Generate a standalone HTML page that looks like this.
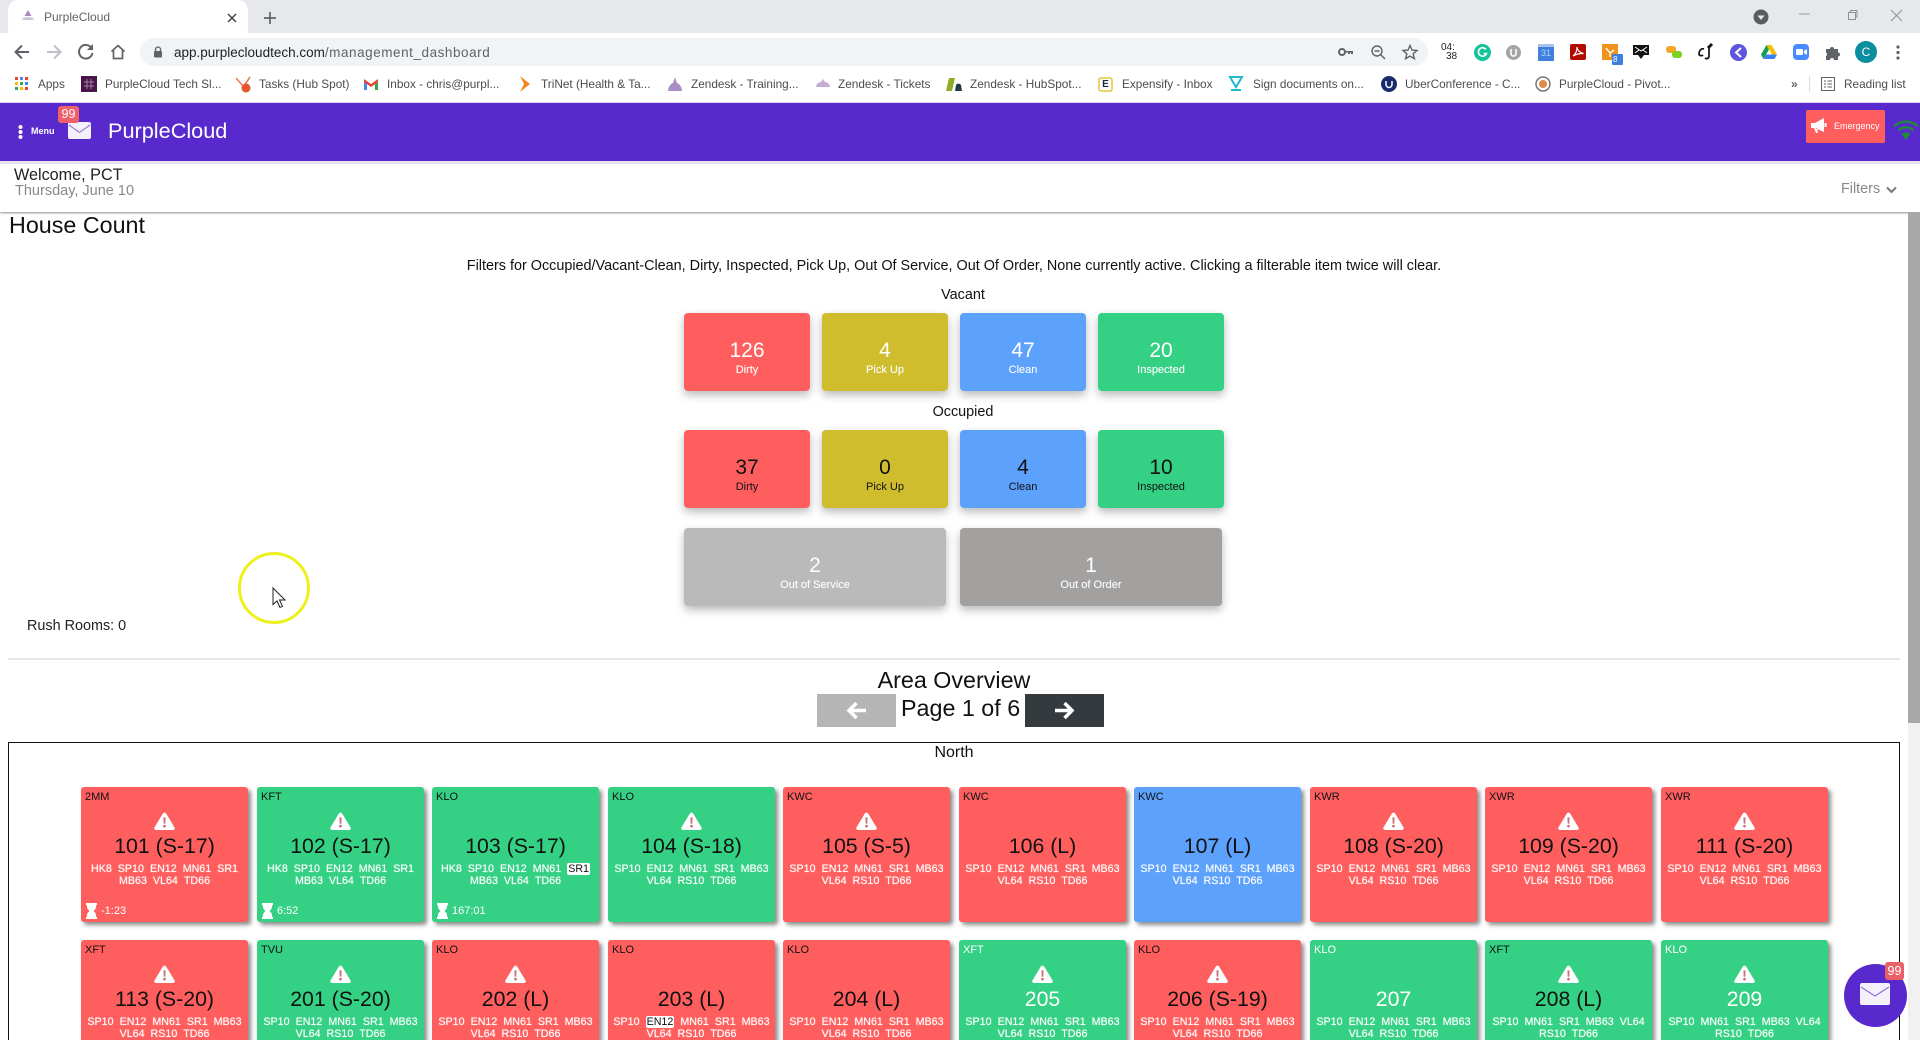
<!DOCTYPE html>
<html lang="en"><head><meta charset="utf-8"><title>PurpleCloud</title>
<style>
*{box-sizing:border-box}
html,body{margin:0;padding:0;width:1920px;height:1040px;overflow:hidden;background:#fff;font-family:"Liberation Sans",sans-serif;color:#111}
#p{position:relative;width:1920px;height:1040px;overflow:hidden;background:#fff}
.a{position:absolute;white-space:nowrap}
svg{position:absolute;overflow:visible}
.bm{position:absolute;top:76px;height:16px;line-height:16px;font-size:11.8px;color:#4a4d50;white-space:nowrap}
.s{position:absolute;width:126px;height:78px;border-radius:4px;box-shadow:0 4px 9px rgba(0,0,0,.28);text-align:center;color:#fff}
.s.k{color:#111}
.s i{position:absolute;left:0;right:0;top:25px;font-style:normal;font-size:21px;line-height:26px}
.s u{position:absolute;left:0;right:0;top:50px;text-decoration:none;font-size:11px;line-height:14px;text-shadow:0 0 1px rgba(255,255,255,.35)}
.s.k u{text-shadow:none}
.t{position:absolute;width:167px;height:135px;border-radius:3px;box-shadow:3px 3px 4px rgba(0,0,0,.45);color:#111;overflow:hidden}
.R{background:#ff5e5e}.G{background:#34d084}.B{background:#5ca1fb}.Y{background:#d0bd2e}
.t b{position:absolute;left:4px;top:3px;font-weight:400;font-size:11px;line-height:14px}
.t .w{left:73px;top:25px;width:21px;height:18px}
.t p{position:absolute;margin:0;left:0;right:0;top:45px;text-align:center;font-size:21.3px;line-height:28px}
.t div{position:absolute;left:0;right:0;top:76px;text-align:center;font-size:10.7px;line-height:12px;color:#fff;text-shadow:0 0 1px rgba(255,255,255,.6)}
.t div span{margin:0 3px}
.t div em{font-style:normal;margin:0 3px;background:#fff;color:#111;border-radius:2px;padding:0 1px;text-shadow:none}
.t .h{left:5px;top:116px;width:11px;height:16px}
.t s{position:absolute;left:20px;top:117px;text-decoration:none;color:#fff;font-size:11px;line-height:14px}
.W,.W b,.W p{color:#fff}
</style></head>
<body>
<div id="p">
<svg width="0" height="0" style="position:absolute"><defs>
<symbol id="warn" viewBox="0 0 21 18"><path d="M10.5 0.6c.8 0 1.4.4 1.8 1.1l8.2 13.7c.8 1.3-.2 2.6-1.6 2.6H2.1C.7 18-.3 16.7.5 15.4L8.7 1.7c.4-.7 1-1.1 1.8-1.1z" fill="#fff"/><path d="M9.4 5.4h2.2l-.3 6.4H9.7zM10.5 12.7a1.4 1.4 0 1 1 0 2.8 1.4 1.4 0 0 1 0-2.8z" fill="#c9707a"/></symbol>
<symbol id="hg" viewBox="0 0 11 16"><path d="M0 0h11v2.2h-1v1.6c0 2-1.4 3.2-2.6 4.2 1.2 1 2.6 2.2 2.6 4.2v1.6h1V16H0v-2.2h1v-1.6C1 10.200 2.400 9 3.600 8 2.400 7 1 5.800 1 3.800V2.200H0z" fill="#fff"/></symbol>
</defs></svg>

<!-- Browser chrome -->
<div class="a" style="left:0;top:0;width:1920px;height:33px;background:#e6e8eb"></div>
<div class="a" style="left:8px;top:0;width:240px;height:35px;background:#fff;border-radius:10px 10px 0 0"></div>
<svg style="left:21px;top:9px" width="14" height="14"><path d="M7 1l3.500 6H3.500z" fill="#a78cc4"/><path d="M1 10c1-2.500 11-2.500 12 0 0 1.500-12 1.500-12 0z" fill="#cfc3dc"/></svg>
<div class="a" style="left:44px;top:10px;font-size:12px;line-height:15px;color:#5f6368">PurpleCloud</div>
<svg style="left:226px;top:12px" width="12" height="12"><path d="M2 2l8 8M10 2l-8 8" stroke="#444" stroke-width="1.500" fill="none"/></svg>
<svg style="left:263px;top:11px" width="14" height="14"><path d="M7 1v12M1 7h12" stroke="#5f6368" stroke-width="1.700" fill="none"/></svg>
<svg style="left:1753px;top:9px" width="16" height="16"><circle cx="8" cy="8" r="7.500" fill="#5a5d61"/><path d="M4.500 6.500h7L8 11z" fill="#e6e8eb"/></svg>
<svg style="left:1799px;top:13px" width="12" height="2"><path d="M0 1h11" stroke="#9a9da1" stroke-width="1"/></svg>
<svg style="left:1846px;top:9px" width="12" height="12"><path d="M2.500 3.500h7v7h-7zM4.500 3.500V1.500h6.500v6.500h-1.500" stroke="#8d9094" fill="none"/></svg>
<svg style="left:1890px;top:9px" width="13" height="13"><path d="M1 1l11 11M12 1L1 12" stroke="#8d9094" stroke-width="1" fill="none"/></svg>

<div class="a" style="left:0;top:33px;width:1920px;height:35px;background:#fff"></div>
<svg style="left:0;top:33px" width="140" height="35"><g fill="none" stroke-width="2"><path d="M29 19H16M22 12.500L15.500 19l6.500 6.500" stroke="#5f6368"/><path d="M47 19h13M54 12.500l6.500 6.500-6.500 6.500" stroke="#bdc1c6"/><path d="M91.500 15a6.800 6.800 0 1 0 1 5" stroke="#5f6368"/><path d="M111.500 18.500l6.500-6 6.500 6M113.500 17.500v8h9v-8" stroke="#5f6368" stroke-width="1.700"/></g><path d="M93 11v6h-6z" fill="#5f6368"/></svg>
<div class="a" style="left:140px;top:38px;width:1288px;height:28px;background:#f1f3f4;border-radius:14px"></div>
<svg style="left:153px;top:46px" width="10" height="12"><path d="M2.500 5V3.500a2.500 2.500 0 0 1 5 0V5" stroke="#5f6368" stroke-width="1.300" fill="none"/><rect x="1" y="5" width="8" height="6.500" rx="1" fill="#5f6368"/></svg>
<div class="a" style="left:174px;top:44px;font-size:13.500px;line-height:17px;color:#202124">app.purplecloudtech.com<span style="color:#5f6368;letter-spacing:.55px">/management_dashboard</span></div>

<svg style="left:1338px;top:46px" width="16" height="12"><circle cx="4" cy="6" r="3" fill="none" stroke="#5f6368" stroke-width="2"/><path d="M7 5h8v3h-2v-1.500h-1V8h-2V6.500H7z" fill="#5f6368"/></svg>
<svg style="left:1371px;top:45px" width="15" height="15"><circle cx="6" cy="6" r="5" fill="none" stroke="#5f6368" stroke-width="1.400"/><path d="M3.500 6h5M9.500 9.500l4.500 4.500" stroke="#5f6368" stroke-width="1.400"/></svg>
<svg style="left:1402px;top:44px" width="16" height="16"><path d="M8 1.500l2 4.600 5 .4-3.800 3.300 1.200 4.900L8 12.100 3.600 14.700l1.200-4.900L1 6.500l5-.4z" fill="none" stroke="#5f6368" stroke-width="1.400"/></svg>

<div class="a" style="left:1441px;top:43px;font-size:10px;line-height:10px;color:#222">04:</div>
<div class="a" style="left:1446px;top:52px;font-size:10px;line-height:10px;color:#222">38</div>
<svg style="left:1474px;top:44px" width="17" height="17"><circle cx="8.500" cy="8.500" r="8.500" fill="#15c39a"/><path d="M12 5.500a4.200 4.200 0 1 0 .5 4H9.500" fill="none" stroke="#fff" stroke-width="1.600"/></svg>
<svg style="left:1506px;top:45px" width="15" height="15"><circle cx="7.500" cy="7.500" r="7.500" fill="#a5a5a5"/><path d="M5 4v4.500a2.500 2.500 0 0 0 5 0V4" fill="none" stroke="#fff" stroke-width="1.600"/></svg>
<svg style="left:1538px;top:44px" width="16" height="17"><rect width="16" height="17" fill="#3f80df"/><rect width="16" height="3" fill="#a6c4ef"/></svg><div class="a" style="left:1541px;top:47px;font-size:9px;line-height:12px;color:#b9d3f7">31</div>
<svg style="left:1570px;top:44px" width="16" height="16"><rect width="16" height="16" rx="2" fill="#b30b00"/><path d="M3 12c3-2 4-6 4-9 0 3 3 6 6.500 6.500C10 9.500 6 10 3 12z" fill="none" stroke="#fff" stroke-width="1.200"/></svg>
<svg style="left:1602px;top:44px" width="22" height="24"><rect width="16" height="16" fill="#f0921e"/><path d="M4 4l4 5 4-3M8 9v4" stroke="#fff" stroke-width="1.400" fill="none"/><rect x="10" y="10" width="11" height="11" rx="1" fill="#3f80df"/></svg><div class="a" style="left:1613px;top:54px;font-size:8px;line-height:12px;color:#fff">8</div>
<svg style="left:1633px;top:45px" width="16" height="16"><path d="M0 0h16v10h-5l-3 4-3-4H0z" fill="#111"/><path d="M2 2l6 4 6-4M2 8l4-3M14 8l-4-3" stroke="#fff" fill="none"/></svg>
<svg style="left:1666px;top:46px" width="17" height="13"><rect x="0" y="0" width="10" height="7" rx="3" fill="#f5a623"/><rect x="6" y="5" width="10" height="7" rx="3" fill="#7ed321"/></svg>
<svg style="left:1698px;top:43px" width="16" height="18"><path d="M6 6C3 5 1 8 1 11c0 2 3 2 4 1M11 5v8c0 3-3 3-4 2" stroke="#111" stroke-width="1.700" fill="none"/><path d="M10 5l4-4" stroke="#111" stroke-width="3"/></svg>
<svg style="left:1730px;top:44px" width="17" height="17"><circle cx="8.500" cy="8.500" r="8.500" fill="#5f56e0"/><path d="M11 4L6 8.500l5 4.500" fill="none" stroke="#fff" stroke-width="2"/></svg>
<svg style="left:1761px;top:45px" width="16" height="14"><path d="M5.500 0h5L16 9.500h-5z" fill="#fbbc04"/><path d="M5.500 0L0 9.500 2.500 14 8 4.500z" fill="#12a150"/><path d="M2.500 14h11L16 9.500H5z" fill="#3b82f0"/></svg>
<svg style="left:1793px;top:44px" width="16" height="16"><rect width="16" height="16" rx="4" fill="#4a8cff"/><rect x="3" y="5" width="7" height="6" rx="1" fill="#fff"/><path d="M11 7l3-2v6l-3-2z" fill="#fff"/></svg>
<svg style="left:1826px;top:45px" width="15" height="15"><path d="M0 4h4a2 2 0 0 1 4 0h4v3.500a2 2 0 0 1 0 4V15H8a2 2 0 0 0-4 0H0v-4a2 2 0 0 0 0-3.500z" fill="#5f6368"/></svg>
<svg style="left:1855px;top:41px" width="22" height="22"><circle cx="11" cy="11" r="11" fill="#0a8d9e"/></svg><div class="a" style="left:1855px;top:45px;width:22px;text-align:center;font-size:12px;line-height:14px;color:#fff">C</div>
<svg style="left:1896px;top:45px" width="4" height="15"><g fill="#5f6368"><circle cx="2" cy="2" r="1.600"/><circle cx="2" cy="7.500" r="1.600"/><circle cx="2" cy="13" r="1.600"/></g></svg>

<!-- Bookmarks -->
<svg style="left:15px;top:77px" width="13" height="13"><g><rect width="3" height="3" fill="#ea4335"/><rect x="5" width="3" height="3" fill="#4285f4"/><rect x="10" width="3" height="3" fill="#ea4335"/><rect y="5" width="3" height="3" fill="#fbbc04"/><rect x="5" y="5" width="3" height="3" fill="#34a853"/><rect x="10" y="5" width="3" height="3" fill="#4285f4"/><rect y="10" width="3" height="3" fill="#34a853"/><rect x="5" y="10" width="3" height="3" fill="#fbbc04"/><rect x="10" y="10" width="3" height="3" fill="#ea4335"/></g></svg>
<div class="bm" style="left:38px">Apps</div>
<svg style="left:81px;top:76px" width="16" height="16"><rect width="16" height="16" fill="#4a154b"/><path d="M6 3v10M10 3v10M3 6h10M3 10h10" stroke="#a47ca6" stroke-width="1"/></svg>
<div class="bm" style="left:105px">PurpleCloud Tech Sl...</div>
<svg style="left:235px;top:76px" width="17" height="17"><path d="M1 2l7 8M15 1l-6 9" stroke="#e8795f" stroke-width="1.600" fill="none"/><circle cx="11" cy="12" r="4.500" fill="#e4572e"/></svg>
<div class="bm" style="left:259px">Tasks (Hub Spot)</div>
<svg style="left:364px;top:78px" width="14" height="12"><path d="M0 2v10h3V5z" fill="#4285f4"/><path d="M14 2v10h-3V5z" fill="#34a853"/><path d="M0 1l7 5 7-5v3L7 9 0 4z" fill="#ea4335"/></svg>
<div class="bm" style="left:387px">Inbox - chris@purpl...</div>
<svg style="left:519px;top:76px" width="12" height="16"><path d="M1 0l10 8-10 8 4-8z" fill="#f08a24"/></svg>
<div class="bm" style="left:541px">TriNet (Health &amp; Ta...</div>
<svg style="left:667px;top:76px" width="16" height="16"><path d="M8 1l2 6c3 1 5 5 5 8H1c0-3 2-7 5-8z" fill="#a98ec4"/></svg>
<div class="bm" style="left:691px">Zendesk - Training...</div>
<svg style="left:816px;top:79px" width="14" height="11"><path d="M7 0l2 3c3 0 5 3 5 5H0c0-2 2-5 5-5z" fill="#c4aed6"/></svg>
<div class="bm" style="left:838px">Zendesk - Tickets</div>
<svg style="left:946px;top:78px" width="16" height="14"><path d="M3 0h6L6 13H0z" fill="#8bb024"/><path d="M10 7a3 3 0 0 1 5 0l1 6h-7z" fill="#1f3a44"/></svg>
<div class="bm" style="left:970px">Zendesk - HubSpot...</div>
<svg style="left:1098px;top:77px" width="15" height="15"><rect x="1" y="1" width="13" height="13" rx="2" fill="#fff" stroke="#e3c63a" stroke-width="1.500"/></svg><div class="a" style="left:1098px;top:77px;width:15px;text-align:center;font-size:10px;line-height:15px;font-weight:700;color:#1b2a44">E</div>
<div class="bm" style="left:1122px">Expensify - Inbox</div>
<svg style="left:1229px;top:76px" width="14" height="16"><path d="M1 1h12L7 11z" fill="none" stroke="#22b8cf" stroke-width="2"/><path d="M2 14h10" stroke="#22b8cf" stroke-width="2"/></svg>
<div class="bm" style="left:1253px">Sign documents on...</div>
<svg style="left:1381px;top:76px" width="16" height="16"><circle cx="8" cy="8" r="8" fill="#1a2a6c"/><path d="M5 5v3.500a3 3 0 0 0 6 0V5" fill="none" stroke="#fff" stroke-width="1.500"/></svg>
<div class="bm" style="left:1405px">UberConference - C...</div>
<svg style="left:1535px;top:76px" width="16" height="16"><circle cx="8" cy="8" r="7" fill="#fff" stroke="#777" stroke-width="1.500"/><circle cx="8" cy="8" r="4" fill="#e08a4a"/></svg>
<div class="bm" style="left:1559px">PurpleCloud - Pivot...</div>
<div class="a" style="left:1791px;top:76px;font-size:12px;line-height:16px;font-weight:700;color:#5f6368">&#187;</div>
<div class="a" style="left:1809px;top:76px;width:1px;height:16px;background:#dadce0"></div>
<svg style="left:1821px;top:77px" width="14" height="14"><rect x=".5" y=".5" width="13" height="13" fill="none" stroke="#5f6368"/><path d="M3 4h2M6.500 4H11M3 7h2M6.500 7H11M3 10h2M6.500 10H11" stroke="#5f6368"/></svg>
<div class="bm" style="left:1844px">Reading list</div>
<div class="a" style="left:0;top:102px;width:1920px;height:1px;background:#e3d8f5"></div>

<!-- App header -->
<div class="a" style="left:0;top:103px;width:1920px;height:58px;background:#5829cc"></div>
<div class="a" style="left:0;top:161px;width:1920px;height:3px;background:#e9e6f2"></div>
<svg style="left:18px;top:125px" width="5" height="14"><g fill="#fff"><circle cx="2.500" cy="2" r="2"/><circle cx="2.500" cy="7" r="2"/><circle cx="2.500" cy="12" r="2"/></g></svg>
<div class="a" style="left:31px;top:125px;font-size:9px;line-height:13px;color:#fff;font-weight:700">Menu</div>
<svg style="left:68px;top:122px" width="23" height="17"><rect width="23" height="17" rx="2" fill="#f4f1fb"/><path d="M1 3l10.500 7.500L22 3" fill="none" stroke="#8f73dd" stroke-width="1.100"/></svg>
<div class="a" style="left:58px;top:106px;width:21px;height:17px;background:#f0606a;border-radius:3px;text-align:center;font-size:12.500px;line-height:17px;color:#fff">99</div>
<div class="a" style="left:108px;top:118px;font-size:21.700px;line-height:26px;color:#fff">PurpleCloud</div>
<div class="a" style="left:1806px;top:110px;width:79px;height:33px;background:#ff5e5e;border-radius:2px"></div>
<svg style="left:1811px;top:118px" width="17" height="16"><path d="M0 5h4l9-5v14L4 10H0zM3 10l2 5h2l-1-5z" fill="#fff"/><path d="M14.500 5v4" stroke="#fff" stroke-width="2"/></svg>
<div class="a" style="left:1834px;top:120px;font-size:9px;line-height:13px;color:#fff">Emergency</div>
<svg style="left:1894px;top:120px" width="24" height="20"><g fill="none" stroke="#1e8a3a" stroke-width="2.400"><path d="M0 6.500a17 17 0 0 1 24 0"/><path d="M4.500 10.500a10.500 10.500 0 0 1 15 0"/></g><path d="M12 20l-4.500-6a7 7 0 0 1 9 0z" fill="#1e8a3a"/></svg>

<!-- Welcome bar -->
<div class="a" style="left:0;top:164px;width:1920px;height:48px;background:#fff;box-shadow:0 1px 2px rgba(0,0,0,.45)"></div>
<div class="a" style="left:14px;top:166px;font-size:16.200px;line-height:18px;color:#222">Welcome, PCT</div>
<div class="a" style="left:15px;top:183px;font-size:14.500px;line-height:17px;color:#888">Thursday, June 10</div>
<div class="a" style="left:1841px;top:181px;font-size:14.400px;line-height:17px;color:#888">Filters</div>
<svg style="left:1886px;top:186px" width="11" height="8"><path d="M1 1.500l4.500 4.500L10 1.500" fill="none" stroke="#777" stroke-width="2"/></svg>

<!-- Scrollbar -->
<div class="a" style="left:1908px;top:212px;width:12px;height:828px;background:#f1f1f1"></div>
<div class="a" style="left:1908px;top:212px;width:12px;height:511px;background:#a8a8a8"></div>

<!-- House Count -->
<div class="a" style="left:9px;top:211px;font-size:23.300px;line-height:28px;color:#111">House Count</div>
<div class="a" style="left:0;top:257px;width:1908px;text-align:center;font-size:14.400px;line-height:18px;color:#111">Filters for Occupied/Vacant-Clean, Dirty, Inspected, Pick Up, Out Of Service, Out Of Order, None currently active. Clicking a filterable item twice will clear.</div>
<div class="a" style="left:863px;top:286px;width:200px;text-align:center;font-size:14.400px;line-height:18px">Vacant</div>
<div class="a" style="left:863px;top:403px;width:200px;text-align:center;font-size:14.400px;line-height:18px">Occupied</div>

<div class="s R" style="left:684px;top:313px"><i>126</i><u>Dirty</u></div>
<div class="s Y" style="left:822px;top:313px"><i>4</i><u>Pick Up</u></div>
<div class="s B" style="left:960px;top:313px"><i>47</i><u>Clean</u></div>
<div class="s G" style="left:1098px;top:313px"><i>20</i><u>Inspected</u></div>
<div class="s k R" style="left:684px;top:430px"><i>37</i><u>Dirty</u></div>
<div class="s k Y" style="left:822px;top:430px"><i>0</i><u>Pick Up</u></div>
<div class="s k B" style="left:960px;top:430px"><i>4</i><u>Clean</u></div>
<div class="s k G" style="left:1098px;top:430px"><i>10</i><u>Inspected</u></div>
<div class="s" style="left:684px;top:528px;width:262px;background:#bababa"><i>2</i><u>Out of Service</u></div>
<div class="s" style="left:960px;top:528px;width:262px;background:#a3a0a0"><i>1</i><u>Out of Order</u></div>

<div class="a" style="left:27px;top:617px;font-size:14.400px;line-height:18px;color:#222">Rush Rooms: 0</div>
<svg style="left:236px;top:550px" width="76" height="76"><circle cx="38" cy="38" r="34.500" fill="none" stroke="#eef01e" stroke-width="3"/><path d="M37 38v16.500l4-3.500 3 6.500 2.500-1.200-3-6.300h5.500z" fill="#fff" stroke="#222" stroke-width="1"/></svg>

<div class="a" style="left:8px;top:658px;width:1892px;height:2px;background:#e8e8e8"></div>

<!-- Area overview -->
<div class="a" style="left:754px;top:666px;width:400px;text-align:center;font-size:23.300px;line-height:28px">Area Overview</div>
<div class="a" style="left:817px;top:694px;width:79px;height:33px;background:#b5b5b5"></div>
<svg style="left:846px;top:701px" width="21" height="19"><path d="M20 9.500H3M10.500 2L3 9.500l7.500 7.500" fill="none" stroke="#fff" stroke-width="3.500"/></svg>
<div class="a" style="left:901px;top:694px;font-size:23.300px;line-height:28px">Page 1 of 6</div>
<div class="a" style="left:1025px;top:694px;width:79px;height:33px;background:#343a3d"></div>
<svg style="left:1054px;top:701px" width="21" height="19"><path d="M1 9.500h17M10.500 2l7.500 7.500-7.500 7.500" fill="none" stroke="#fff" stroke-width="3.500"/></svg>

<div class="a" style="left:8px;top:742px;width:1892px;height:298px;border:1px solid #111;border-bottom:0"></div>
<div class="a" style="left:854px;top:744px;width:200px;text-align:center;font-size:16px;line-height:18px">North</div>

<!-- Row 1 -->
<div class="t R" style="left:81px;top:787px"><b>2MM</b><svg class="w"><use href="#warn"/></svg><p>101 (S-17)</p><div><span>HK8</span><span>SP10</span><span>EN12</span><span>MN61</span><span>SR1</span><br><span>MB63</span><span>VL64</span><span>TD66</span></div><svg class="h"><use href="#hg"/></svg><s>-1:23</s></div>
<div class="t G" style="left:257px;top:787px"><b>KFT</b><svg class="w"><use href="#warn"/></svg><p>102 (S-17)</p><div><span>HK8</span><span>SP10</span><span>EN12</span><span>MN61</span><span>SR1</span><br><span>MB63</span><span>VL64</span><span>TD66</span></div><svg class="h"><use href="#hg"/></svg><s>6:52</s></div>
<div class="t G" style="left:432px;top:787px"><b>KLO</b><p>103 (S-17)</p><div><span>HK8</span><span>SP10</span><span>EN12</span><span>MN61</span><em>SR1</em><br><span>MB63</span><span>VL64</span><span>TD66</span></div><svg class="h"><use href="#hg"/></svg><s>167:01</s></div>
<div class="t G" style="left:608px;top:787px"><b>KLO</b><svg class="w"><use href="#warn"/></svg><p>104 (S-18)</p><div><span>SP10</span><span>EN12</span><span>MN61</span><span>SR1</span><span>MB63</span><br><span>VL64</span><span>RS10</span><span>TD66</span></div></div>
<div class="t R" style="left:783px;top:787px"><b>KWC</b><svg class="w"><use href="#warn"/></svg><p>105 (S-5)</p><div><span>SP10</span><span>EN12</span><span>MN61</span><span>SR1</span><span>MB63</span><br><span>VL64</span><span>RS10</span><span>TD66</span></div></div>
<div class="t R" style="left:959px;top:787px"><b>KWC</b><p>106 (L)</p><div><span>SP10</span><span>EN12</span><span>MN61</span><span>SR1</span><span>MB63</span><br><span>VL64</span><span>RS10</span><span>TD66</span></div></div>
<div class="t B" style="left:1134px;top:787px"><b>KWC</b><p>107 (L)</p><div><span>SP10</span><span>EN12</span><span>MN61</span><span>SR1</span><span>MB63</span><br><span>VL64</span><span>RS10</span><span>TD66</span></div></div>
<div class="t R" style="left:1310px;top:787px"><b>KWR</b><svg class="w"><use href="#warn"/></svg><p>108 (S-20)</p><div><span>SP10</span><span>EN12</span><span>MN61</span><span>SR1</span><span>MB63</span><br><span>VL64</span><span>RS10</span><span>TD66</span></div></div>
<div class="t R" style="left:1485px;top:787px"><b>XWR</b><svg class="w"><use href="#warn"/></svg><p>109 (S-20)</p><div><span>SP10</span><span>EN12</span><span>MN61</span><span>SR1</span><span>MB63</span><br><span>VL64</span><span>RS10</span><span>TD66</span></div></div>
<div class="t R" style="left:1661px;top:787px"><b>XWR</b><svg class="w"><use href="#warn"/></svg><p>111 (S-20)</p><div><span>SP10</span><span>EN12</span><span>MN61</span><span>SR1</span><span>MB63</span><br><span>VL64</span><span>RS10</span><span>TD66</span></div></div>

<!-- Row 2 -->
<div class="t R" style="left:81px;top:940px"><b>XFT</b><svg class="w"><use href="#warn"/></svg><p>113 (S-20)</p><div><span>SP10</span><span>EN12</span><span>MN61</span><span>SR1</span><span>MB63</span><br><span>VL64</span><span>RS10</span><span>TD66</span></div></div>
<div class="t G" style="left:257px;top:940px"><b>TVU</b><svg class="w"><use href="#warn"/></svg><p>201 (S-20)</p><div><span>SP10</span><span>EN12</span><span>MN61</span><span>SR1</span><span>MB63</span><br><span>VL64</span><span>RS10</span><span>TD66</span></div></div>
<div class="t R" style="left:432px;top:940px"><b>KLO</b><svg class="w"><use href="#warn"/></svg><p>202 (L)</p><div><span>SP10</span><span>EN12</span><span>MN61</span><span>SR1</span><span>MB63</span><br><span>VL64</span><span>RS10</span><span>TD66</span></div></div>
<div class="t R" style="left:608px;top:940px"><b>KLO</b><p>203 (L)</p><div><span>SP10</span><em>EN12</em><span>MN61</span><span>SR1</span><span>MB63</span><br><span>VL64</span><span>RS10</span><span>TD66</span></div></div>
<div class="t R" style="left:783px;top:940px"><b>KLO</b><p>204 (L)</p><div><span>SP10</span><span>EN12</span><span>MN61</span><span>SR1</span><span>MB63</span><br><span>VL64</span><span>RS10</span><span>TD66</span></div></div>
<div class="t G W" style="left:959px;top:940px"><b>XFT</b><svg class="w"><use href="#warn"/></svg><p>205</p><div><span>SP10</span><span>EN12</span><span>MN61</span><span>SR1</span><span>MB63</span><br><span>VL64</span><span>RS10</span><span>TD66</span></div></div>
<div class="t R" style="left:1134px;top:940px"><b>KLO</b><svg class="w"><use href="#warn"/></svg><p>206 (S-19)</p><div><span>SP10</span><span>EN12</span><span>MN61</span><span>SR1</span><span>MB63</span><br><span>VL64</span><span>RS10</span><span>TD66</span></div></div>
<div class="t G W" style="left:1310px;top:940px"><b>KLO</b><p>207</p><div><span>SP10</span><span>EN12</span><span>MN61</span><span>SR1</span><span>MB63</span><br><span>VL64</span><span>RS10</span><span>TD66</span></div></div>
<div class="t G" style="left:1485px;top:940px"><b>XFT</b><svg class="w"><use href="#warn"/></svg><p>208 (L)</p><div><span>SP10</span><span>MN61</span><span>SR1</span><span>MB63</span><span>VL64</span><br><span>RS10</span><span>TD66</span></div></div>
<div class="t G W" style="left:1661px;top:940px"><b>KLO</b><svg class="w"><use href="#warn"/></svg><p>209</p><div><span>SP10</span><span>MN61</span><span>SR1</span><span>MB63</span><span>VL64</span><br><span>RS10</span><span>TD66</span></div></div>

<!-- Chat bubble -->
<div class="a" style="left:1844px;top:964px;width:63px;height:63px;border-radius:50%;background:#5829cc"></div>
<svg style="left:1860px;top:983px" width="30" height="22"><rect width="30" height="22" rx="2" fill="#f4f1fb"/><path d="M1 4l14 9 14-9" fill="none" stroke="#8f73dd" stroke-width="1.200"/></svg>
<div class="a" style="left:1885px;top:962px;width:19px;height:18px;background:#e96068;border-radius:3px;text-align:center;font-size:12.500px;line-height:18px;color:#fff">99</div>
</div>
</body></html>
